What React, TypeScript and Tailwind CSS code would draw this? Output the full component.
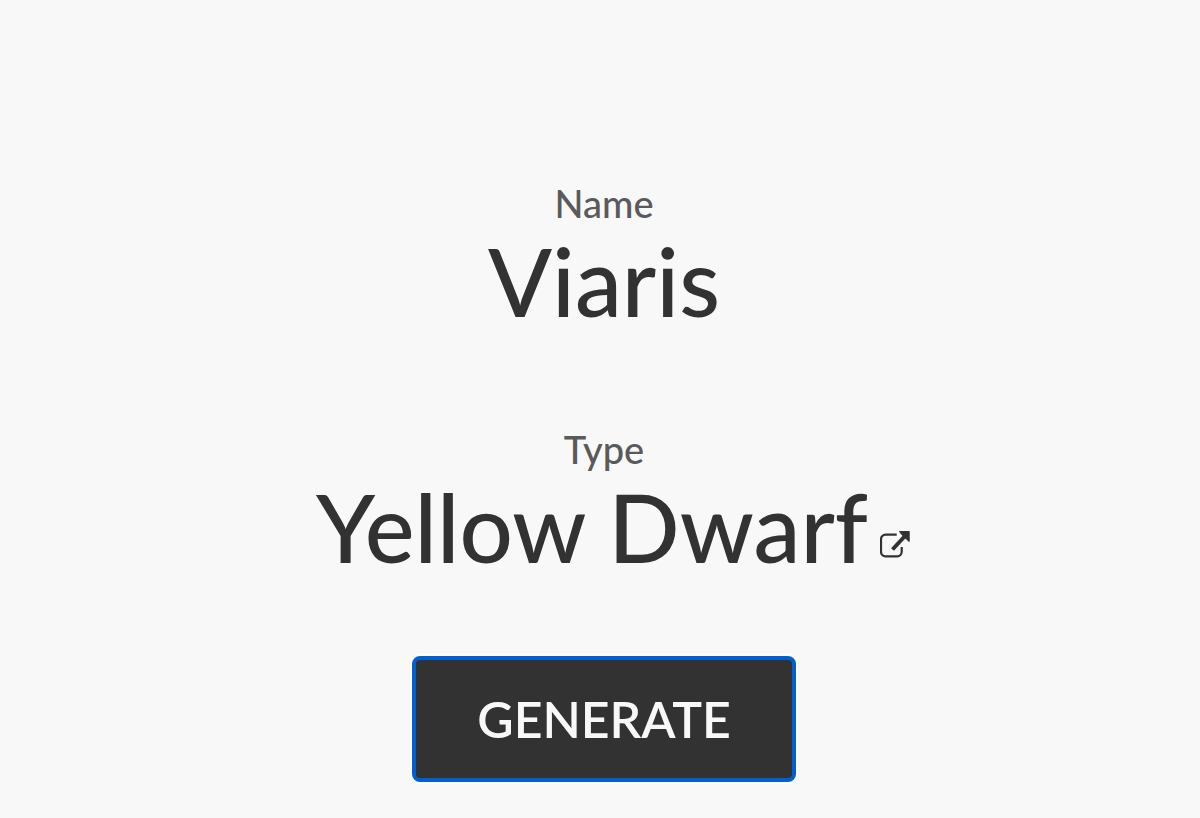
import { useState } from "react";

type Star = { name: string; type: string; href: string };

const STARS: Star[] = [
  { name: "Viaris", type: "Yellow Dwarf", href: "#yellow-dwarf" },
  { name: "Oremus", type: "Red Giant", href: "#red-giant" },
  { name: "Caldra", type: "White Dwarf", href: "#white-dwarf" },
];

function ExternalIcon() {
  return (
    <svg viewBox="0 0 30 28" className="h-7 w-[30px] shrink-0" fill="none" aria-hidden="true">
      <path
        d="M16.7 4.700H5.500A4.500 4.500 0 0 0 1 9.200v12.600a4.500 4.500 0 0 0 4.500 4.500h11.700a4.500 4.500 0 0 0 4.500-4.500V17"
        stroke="currentColor"
        strokeWidth="2.2"
      />
      <path d="M12.500 19.500 25 6" stroke="currentColor" strokeWidth="4" />
      <path
        d="M19.5 1.500H29.200V11.500L26.500 9.200 21.500 4.200z"
        fill="currentColor"
        stroke="currentColor"
        strokeLinejoin="round"
      />
    </svg>
  );
}

export default function App() {
  const [index, setIndex] = useState(0);
  const star = STARS[index];

  return (
    <main className="flex min-h-screen flex-col items-center bg-[#f8f8f8] pt-[178px] pl-2 font-['Lato','Trebuchet_MS',sans-serif] font-medium text-[#323232]">
      <dl className="flex flex-col items-center gap-[90px] text-center">
        <div>
          <dt className="text-[38px] leading-[50px] text-[#5a5a5a]">Name</dt>
          <dd className="text-[94px] leading-[106px]">{star.name}</dd>
        </div>
        <div>
          <dt className="text-[38px] leading-[50px] text-[#5a5a5a]">Type</dt>
          <dd className="text-[94px] leading-[106px]">
            {/* left padding balances part of the icon's width */}
            <a href={star.href} className="flex items-end gap-3 pl-[18px]">
              {star.type}
              <span className="pb-[22px]">
                <ExternalIcon />
              </span>
            </a>
          </dd>
        </div>
      </dl>
      <button
        type="button"
        onClick={() => setIndex((index + 1) % STARS.length)}
        className="mt-[76px] rounded-lg border-4 border-[#0060d0] bg-[#323232] px-[61px] py-[27px] text-[50px] leading-[64px] font-semibold text-[#f8f8f8] uppercase ring-2 ring-white"
      >
        Generate
      </button>
    </main>
  );
}
